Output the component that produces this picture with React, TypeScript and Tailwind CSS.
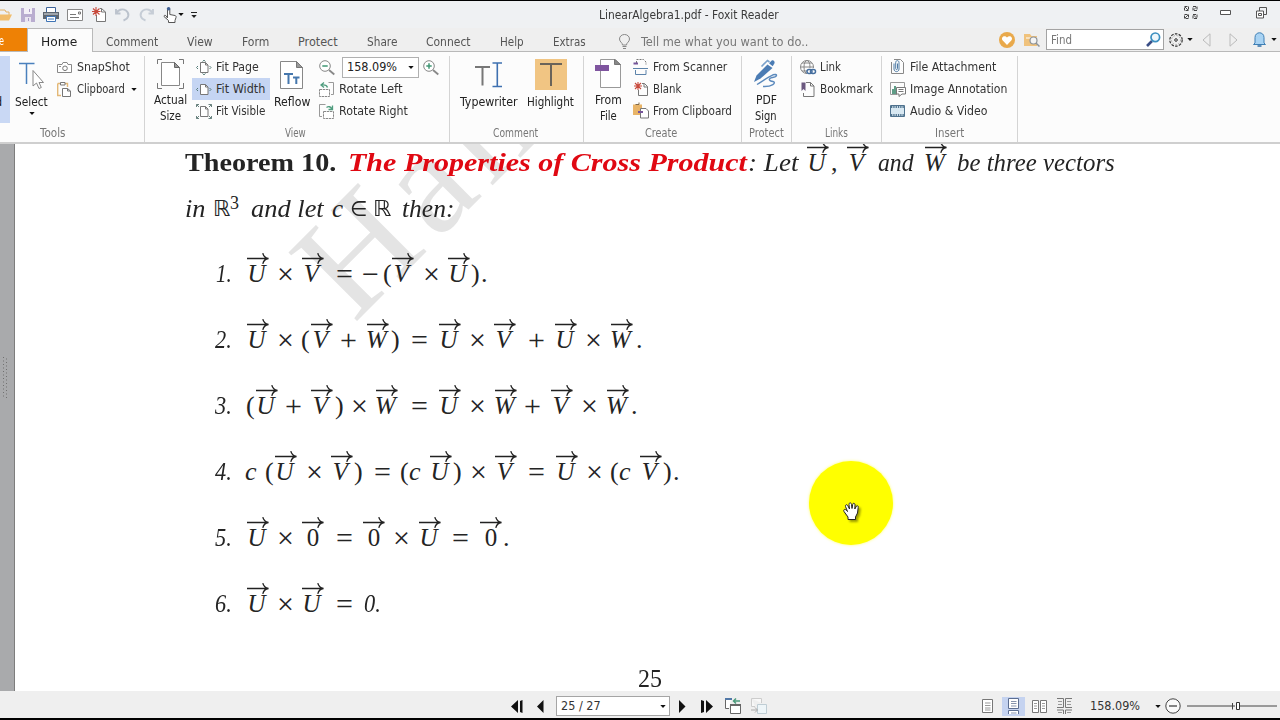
import { useLayoutEffect, useRef, type ReactNode } from 'react';
import clsx from 'clsx';

// Text squeezed or stretched horizontally to an exact width
function Fit({ w, children, className }: { w: number; children: ReactNode; className?: string }) {
  const ref = useRef<HTMLSpanElement>(null);

  useLayoutEffect(() => {
    const el = ref.current;
    if (!el) return;
    el.style.transform = `scaleX(${w / el.offsetWidth})`;
  }, [w]);

  return (
    <span className={clsx('block shrink-0 whitespace-nowrap', className)} style={{ width: w }}>
      <span ref={ref} className="inline-block origin-left">
        {children}
      </span>
    </span>
  );
}

function Icon({ w, h, children, className }: { w: number; h: number; children: ReactNode; className?: string }) {
  return (
    <svg width={w} height={h} viewBox={`0 0 ${w} ${h}`} fill="none" className={clsx('block shrink-0 overflow-visible', className)}>
      {children}
    </svg>
  );
}

function Caret({ className }: { className?: string }) {
  return (
    <Icon w={6} h={3} className={className}>
      <path d="M0.3 0H5.7L3 3Z" fill="#111" />
    </Icon>
  );
}

/* ---------- title bar ---------- */

function TitleBar() {
  return (
    <div className="flex h-[27px] items-center bg-[#eff1f3]">
      <Icon w={12} h={14}>
        <path d="M0 2H5L6 4H9V7" stroke="#e0b066" />
        <path d="M0 6.500H12L9 12.500H0Z" fill="#f1bd6c" />
      </Icon>
      <Icon w={14} h={14} className="ml-[9px]">
        <path d="M0 0H14V14H0Z" fill="#b9add0" />
        <path d="M3 0H11V6H3Z" fill="#f3f0f7" />
        <path d="M4 9H10V14H4Z" fill="#e9e5f0" />
        <path d="M7.500 10V13M8.500 1V4" stroke="#a99bc4" />
      </Icon>
      <Icon w={16} h={15} className="ml-2">
        <path d="M3.500 5V.5H12.500V5" fill="#fff" stroke="#3c6399" />
        <path d="M0 5H16V12H0Z" fill="#5e6670" />
        <path d="M1 7H15" stroke="#dfe4ea" />
        <path d="M3.500 9.500H12.500V14.500H3.500Z" fill="#fff" stroke="#3f74b5" />
        <path d="M5 12H11" stroke="#3f74b5" />
      </Icon>
      <Icon w={16} h={12} className="ml-2">
        <path d="M.5.5H15.500V11.500H.5Z" fill="#fff" stroke="#888" />
        <path d="M3 5.500H9M3 8.500H12M11.500 3H13.500V5H11.500Z" stroke="#777" />
      </Icon>
      <Icon w={14} h={15} className="ml-[9px]">
        <path d="M4.500 8V14.500H13.500V5L9.500 1.500H8" fill="#fff" stroke="#777" />
        <path d="M9.500 1.500V5H13.500" stroke="#777" />
        <path d="M4 0V9M0 4.500H8.500M1 1.500L7.500 7.500M7.500 1.500L1 7.500" stroke="#c84a3c" strokeWidth="1.1" />
      </Icon>
      <Icon w={15} h={13} className="ml-[9px]">
        <path d="M1 1V5.500H5.500M1 5.500C3 2 7 0 11 2.500C15 5.500 14 10.500 8.500 12.500" stroke="#bcc3cd" strokeWidth="1.9" />
      </Icon>
      <Icon w={15} h={13} className="ml-[9px]">
        <path d="M14 1V5.500H9.500M14 5.500C12 2 8 0 4 2.500C0 5.500 1 10.500 6.500 12.500" stroke="#c6cdd6" strokeWidth="1.9" />
      </Icon>
      <Icon w={15} h={16} className="ml-[9px]">
        <path d="M4.500 11V2.500C4.500 .8 6.800 .8 6.800 2.500V7.500L12 8.500C13 8.800 13.300 9.500 13 10.500L12 13.500V15.500H5.500V13.500L1 9.500C.8 8.300 2 8 3 8.800Z" fill="#fff" stroke="#555" />
        <circle cx="5.600" cy="1.800" r="1.800" fill="#3f5f94" />
      </Icon>
      <Caret className="ml-0" />
      <Icon w={6} h={6} className="ml-[7px]">
        <path d="M0 .5H6" stroke="#222" />
        <path d="M.3 3H5.700L3 6Z" fill="#222" />
      </Icon>
      <Fit w={180} className="ml-[402px] text-[#3a3a3a]">LinearAlgebra1.pdf - Foxit Reader</Fit>
      <Icon w={14} h={13} className="ml-[405px] -mt-[5px]">
        <path d="M.5.5H4.500V4.500H.5ZM9 .5H13V4.500H9ZM.5 8.500H4.500V12.500H.5ZM9 8.500H13V12.500H9Z" stroke="#444" strokeDasharray="3 1" />
        <path d="M1 1L4 4M12.500 1L9.500 4M1 12L4 9M12.500 12L9.500 9" stroke="#555" />
      </Icon>
      <Icon w={12} h={5} className="ml-[22px] -mt-[4px]">
        <path d="M.5.5H10.500V4.500H.5Z" fill="#fff" stroke="#555" />
      </Icon>
      <Icon w={12} h={12} className="ml-[24px] -mt-[4px]">
        <path d="M3.500 4V.5H10.500V7.500H8" stroke="#555" />
        <path d="M.5 4H7.500V11H.5Z" fill="#fff" stroke="#555" />
        <path d="M2.500 6.500H5.500V8.500H2.500Z" stroke="#555" />
      </Icon>
    </div>
  );
}

/* ---------- ribbon tabs ---------- */

const tabs = [
  { label: 'Comment', w: 52 },
  { label: 'View', w: 26 },
  { label: 'Form', w: 27 },
  { label: 'Protect', w: 40 },
  { label: 'Share', w: 30 },
  { label: 'Connect', w: 45 },
  { label: 'Help', w: 24 },
  { label: 'Extras', w: 33 },
];

function TabBar() {
  return (
    <div className="flex h-6 shrink-0 border-b border-[#b9b9b9] bg-[#efefef]">
      <div className="flex w-[27px] items-center bg-[#ee8105] pt-[3px] text-white">
        <Fit w={5} className="-ml-[1px]">e</Fit>
      </div>
      <div className="-mb-px flex w-[66px] items-center justify-center border border-b-0 border-[#b9b9b9] bg-[#fcfcfc] pt-[2px] pr-[2px] text-[#222]">
        <Fit w={36}>Home</Fit>
      </div>
      <div className="ml-[13px] flex items-center gap-[29px] pt-[4px] text-[#555]">
        {tabs.map((tab) => (
          <Fit key={tab.label} w={tab.w}>{tab.label}</Fit>
        ))}
      </div>
      <div className="ml-[33px] flex items-center gap-[11px] pt-[4px] text-[#777]">
        <Icon w={11} h={15}>
          <path d="M3.500 11C3.500 8.500 .5 8 .5 5C.5 2.300 2.800 .5 5.500 .5C8.200 .5 10.500 2.300 10.500 5C10.500 8 7.500 8.500 7.500 11ZM3.500 12.500H7.500M4 14.500H7" stroke="#888" />
        </Icon>
        <Fit w={167}>Tell me what you want to do..</Fit>
      </div>
      <div className="ml-[191px] flex items-center">
        <Icon w={16} h={16}>
          <circle cx="8" cy="8" r="8" fill="#e9a94b" />
          <path d="M8 13L3.500 8.300C1.500 5.500 5.500 2.500 8 5.500C10.500 2.500 14.500 5.500 12.500 8.300Z" fill="#fff" />
        </Icon>
        <Icon w={16} h={14} className="ml-[9px]">
          <path d="M0 1H6L7.500 3H13V13H0Z" fill="#f0c27c" />
          <path d="M2 5H13" stroke="#fff" />
          <circle cx="9.500" cy="7.500" r="3.500" fill="#f4f4f4" stroke="#8d9399" strokeWidth="1.200" />
          <path d="M12 10L15.500 13.500" stroke="#8d9399" strokeWidth="1.500" />
        </Icon>
        <div className="ml-[6px] flex h-[21px] w-[118px] items-center justify-between border border-[#a3a3a3] bg-white pr-[2px] pl-[4px] text-[#777]">
          <Fit w={21} className="pt-px">Find</Fit>
          <Icon w={15} h={15}>
            <path d="M6 9L1 14" stroke="#3b4f87" strokeWidth="2.600" />
            <circle cx="9.300" cy="5.300" r="4.300" fill="#eef7fc" stroke="#3b8fc0" strokeWidth="1.700" />
          </Icon>
        </div>
        <Icon w={14} h={14} className="ml-[5px]">
          <circle cx="7" cy="7" r="6.200" stroke="#333" strokeWidth="1.200" strokeDasharray="2.600 1.300" />
          <circle cx="7" cy="7" r="4.500" stroke="#777" strokeDasharray="1.500 1.500" strokeWidth=".6" />
          <circle cx="7" cy="7" r="1.300" stroke="#333" />
        </Icon>
        <Caret className="ml-[4px]" />
        <Icon w={9} h={14} className="ml-[9px]">
          <path d="M8 .8V13.200L1 7Z" stroke="#bbb" />
        </Icon>
        <Icon w={9} h={14} className="ml-[18px]">
          <path d="M1 .8V13.200L8 7Z" stroke="#bbb" />
        </Icon>
        <Icon w={13} h={15} className="ml-[15px]">
          <path d="M.5 12.500L2 11V5.500C2 -.8 11 -.8 11 5.500V11L12.500 12.500Z" fill="#a9d3f3" stroke="#3e7fb5" />
          <path d="M4.500 14H8.500" stroke="#2f6ea6" strokeWidth="1.500" />
        </Icon>
        <Caret className="ml-[5px]" />
      </div>
    </div>
  );
}

/* ---------- ribbon ---------- */

function Group({ label, labelW, className, labelClass, children }: { label: string; labelW: number; className: string; labelClass?: string; children: ReactNode }) {
  return (
    <div className={clsx('flex shrink-0 flex-col border-r border-[#d4d4d4]', className)}>
      <div className="flex h-[67px]">{children}</div>
      <div className={clsx('flex h-[17px] items-center justify-center pt-[3px] text-[#777]', labelClass ?? 'pr-[3px]')}>
        <Fit w={labelW}>{label}</Fit>
      </div>
    </div>
  );
}

function BigButton({ icon, lines, className, children }: { icon: ReactNode; lines: [string, number][]; className?: string; children?: ReactNode }) {
  return (
    <div className={clsx('flex shrink-0 flex-col items-center text-[#222]', className)}>
      <div className="flex h-[37px] items-center">{icon}</div>
      {lines.map(([text, w]) => (
        <Fit key={text} w={w} className="h-4 leading-[17px]">{text}</Fit>
      ))}
      {children}
    </div>
  );
}

function SmallButton({ icon, label, w, active, children }: { icon: ReactNode; label: string; w: number; active?: boolean; children?: ReactNode }) {
  return (
    <div className={clsx('flex h-[22px] items-center pl-1 text-[#333]', active && 'bg-[#c5d5f3]')}>
      <span className="flex w-5 shrink-0">{icon}</span>
      <Fit w={w}>{label}</Fit>
      {children}
    </div>
  );
}

function FitIcon({ kind }: { kind: 'page' | 'width' | 'visible' }) {
  return (
    <Icon w={16} h={15}>
      <path d="M4.500 2.500H9.500L12 5V12.500H4.500Z" fill="#fff" stroke="#777" />
      <path d="M9.500 2.500V5H12" stroke="#777" />
      {kind !== 'visible' && <path d="M2 6L.5 7.500L2 9M13.500 6L15 7.500L13.500 9" stroke="#557c78" />}
      {kind === 'page' && <path d="M6.500 1.500L8 .2L9.500 1.500M6.500 13.500L8 14.800L9.500 13.500" stroke="#557c78" />}
      {kind === 'visible' && (
        <path d="M.5 3V.5H3M.5.5L3 3M12.500.5H15.500V3M15.500.5L13 3M.5 12V14.500H3M.5 14.500L3 12M15.500 12V14.500H12.500M15.500 14.500L13 12" stroke="#69827f" />
      )}
    </Icon>
  );
}

function ZoomIcon({ plus, className }: { plus?: boolean; className?: string }) {
  return (
    <Icon w={16} h={15} className={className}>
      <circle cx="6" cy="6" r="5.300" fill="#fff" stroke="#888" />
      <path d="M10 10L15.300 14.500" stroke="#888" strokeWidth="1.800" />
      <path d="M3.300 6H8.700" stroke="#3f9673" strokeWidth="1.500" />
      {plus && <path d="M6 3.300V8.700" stroke="#3f9673" strokeWidth="1.500" />}
    </Icon>
  );
}

function RotateIcon({ right }: { right?: boolean }) {
  if (right) {
    return (
      <Icon w={15} h={15}>
        <path d="M6.500 .5H.5V12.500H3" stroke="#999" />
        <path d="M4.500 7.500H14.500V14.500H4.500Z" fill="#fff" stroke="#888" strokeDasharray="2.500 .7" />
        <path d="M13.500 1.500V5.500H9.500M13 5C11.500 2.500 9.500 2 7.500 3.500" stroke="#4f9c7e" strokeWidth="1.300" />
      </Icon>
    );
  }
  return (
    <Icon w={15} h={15}>
      <path d="M9.500 .5H14.500V12.500H12" stroke="#999" />
      <path d="M.5 7.500H10.500V14.500H.5Z" fill="#fff" stroke="#888" strokeDasharray="2.500 .7" />
      <path d="M5 .5L2 3L5 5.500M2.300 3C6 2.500 8 3.500 8.500 5.500" stroke="#4f9c7e" strokeWidth="1.300" />
    </Icon>
  );
}

function Ribbon() {
  return (
    <div className="flex h-[92px] shrink-0 border-b-2 border-[#cfcfcf] bg-[#fcfcfc] pt-1">
      <Group label="Tools" labelW={25} labelClass="pr-[40px]" className="w-[145px]">
        <div className="flex h-[67px] w-[10px] flex-col bg-[#c9d8f4] pt-[37px] text-[#222]">
          <Fit w={7} className="-ml-[5px] leading-[17px]">d</Fit>
        </div>
        <BigButton
          className="ml-[5px] w-[33px]"
          lines={[['Select', 33]]}
          icon={
            <Icon w={26} h={28}>
              <path d="M0 2.500H15.500M7.500 2.500V23" stroke="#4a80bd" strokeWidth="1.500" />
              <path d="M14 9.500V25L17.500 22L20 27.500L22.300 26.500L20 21.500H24.500Z" fill="#fff" stroke="#888" />
            </Icon>
          }
        >
          <Caret className="mt-[3px]" />
        </BigButton>
        <div className="ml-[5px]">
          <SmallButton
            label="SnapShot"
            w={53}
            icon={
              <Icon w={15} h={11}>
                <path d="M.5 2.500H5L6 .5H10L11 2.500H14.500V10.500H.5Z" fill="#fff" stroke="#888" />
                <circle cx="8" cy="6.300" r="2.300" stroke="#777" />
                <path d="M2 4.500H4" stroke="#888" />
              </Icon>
            }
          />
          <SmallButton
            label="Clipboard"
            w={48}
            icon={
              <Icon w={14} h={15}>
                <path d="M.7 1.500H10.500V5M.7 1.500V13.500H4" stroke="#e3b877" strokeWidth="1.400" />
                <path d="M3.500 .5H8V3H3.500Z" fill="#fff" stroke="#777" />
                <path d="M5.500 6.500H10.500L13.500 9V14.500H5.500ZM10.500 6.500V9H13.500" fill="#fff" stroke="#777" />
              </Icon>
            }
          >
            <Caret className="ml-[6px]" />
          </SmallButton>
        </div>
      </Group>

      <Group label="View" labelW={21} className="w-[305px]">
        <BigButton
          className="ml-[8px] w-[34px]"
          lines={[['Actual', 33], ['Size', 21]]}
          icon={
            <Icon w={27} h={30}>
              <path d="M5 .5H.5V5M22 .5H26.500V5M.5 24V29.500H5M26.500 24V29.500H22" stroke="#777" />
              <path d="M4.500 3.500H17.500L22.500 8.500V26.500H4.500Z" fill="#fff" stroke="#888" />
              <path d="M17.500 3.500V8.500H22.500Z" fill="#999" stroke="#666" />
            </Icon>
          }
        />
        <div className="ml-[5px] w-[78px]">
          <SmallButton label="Fit Page" w={43} icon={<FitIcon kind="page" />} />
          <SmallButton label="Fit Width" w={49} active icon={<FitIcon kind="width" />} />
          <SmallButton label="Fit Visible" w={49} icon={<FitIcon kind="visible" />} />
        </div>
        <BigButton
          className="ml-[4px] w-[36px]"
          lines={[['Reflow', 36]]}
          icon={
            <Icon w={23} h={28} className="-ml-[2px]">
              <path d="M.5.5H16.500L22.500 6.500V27.500H.5Z" fill="#fff" stroke="#888" />
              <path d="M16.500 .5V6.500H22.500Z" fill="#999" stroke="#777" />
              <path d="M4 13H13M8.500 13V23M13 16.500H19.500M16.300 16.500V23" stroke="#4577ad" strokeWidth="2" />
            </Icon>
          }
        />
        <div className="ml-[5px]">
          <div className="flex h-[22px] items-center pl-1">
            <ZoomIcon />
            <div className="ml-[7px] flex h-[21px] w-[77px] items-center justify-between border border-[#b0b0b0] bg-white px-1 text-[#222]">
              <Fit w={50}>158.09%</Fit>
              <Caret />
            </div>
            <ZoomIcon plus className="ml-[4px]" />
          </div>
          <SmallButton label="Rotate Left" w={63} icon={<RotateIcon />} />
          <SmallButton label="Rotate Right" w={69} icon={<RotateIcon right />} />
        </div>
      </Group>

      <Group label="Comment" labelW={45} className="w-[134px]">
        <BigButton
          className="ml-[10px] w-[58px]"
          lines={[['Typewriter', 58]]}
          icon={
            <Icon w={28} h={26}>
              <path d="M0 5H15M7.500 5V23.500" stroke="#777" strokeWidth="2" />
              <path d="M17.500 1H27M17.500 24.500H27M22.300 1V24.500" stroke="#3e70b0" strokeWidth="1.600" />
            </Icon>
          }
        />
        <BigButton
          className="ml-[9px] w-[47px]"
          lines={[['Highlight', 47]]}
          icon={
            <Icon w={32} h={31}>
              <path d="M0 0H32V31H0Z" fill="#f1c583" />
              <path d="M5 5H27M16 5V27" stroke="#6b6459" strokeWidth="2" />
            </Icon>
          }
        />
      </Group>

      <Group label="Create" labelW={32} className="w-[158px]">
        <BigButton
          className="ml-[10px] w-[28px]"
          lines={[['From', 27], ['File', 17]]}
          icon={
            <Icon w={26} h={29}>
              <path d="M5.500 .5H20.500L25.500 5.500V28.500H5.500Z" fill="#fff" stroke="#999" />
              <path d="M19.500 .5V5.500H25.500Z" fill="#888" stroke="#777" />
              <path d="M0 6H14V12H0Z" fill="#7f559f" />
            </Icon>
          }
        />
        <div className="ml-[7px]">
          <SmallButton
            label="From Scanner"
            w={74}
            icon={
              <Icon w={15} h={16}>
                <path d="M3.500 2V5M3.500 .5H10.500L13 3V5.500" stroke="#777" strokeDasharray="2 1" />
                <path d="M.5 4.500H5" stroke="#75549b" strokeWidth="2" />
                <path d="M0 9.500H15M2.500 11V15.500H13V11" stroke="#5c83aa" />
              </Icon>
            }
          />
          <SmallButton
            label="Blank"
            w={28}
            icon={
              <Icon w={14} h={14} className="ml-[1px]">
                <path d="M4.500 8V13.500H13.500V4.500L10.500 1.500H8M10 1.500V5H13.500" stroke="#777" />
                <path d="M4 0V8M0 4H8M1 1L7 7M7 1L1 7" stroke="#c84a3c" strokeWidth="1.100" />
              </Icon>
            }
          />
          <SmallButton
            label="From Clipboard"
            w={79}
            icon={
              <Icon w={15} h={16}>
                <path d="M0 1.500H9V12H0Z" fill="#e8b468" />
                <path d="M2.500 1.500H6V-.5" stroke="#806846" />
                <path d="M7.500 5.500H13L15.500 8V15H7.500Z" fill="#fff" stroke="#777" />
                <path d="M5 9H10" stroke="#76549b" strokeWidth="2" />
              </Icon>
            }
          />
        </div>
      </Group>

      <Group label="Protect" labelW={35} labelClass="pr-px" className="w-[50px]">
        <BigButton
          className="ml-[12px] w-[24px]"
          lines={[['PDF', 21], ['Sign', 22]]}
          icon={
            <Icon w={25} h={28}>
              <path d="M0 22L2.500 15.500L13.500 4.500L18.500 8L6.500 18.500Z" fill="#4b7cb4" />
              <path d="M7.500 6.500L13.500 .5L15.500 2" stroke="#7ba2cb" strokeWidth="1.600" />
              <path d="M15 3.300L18 .3C20 0 21 2 20.500 3.300L18.700 6.200Z" fill="#4b7cb4" />
              <path d="M3 24.500C8 21.500 14 17 19 14.800C24 13.500 23.500 16.500 18.500 17.500C13.500 18.500 15 21 19 21.500C23 22.500 18 27 9 26.500" stroke="#5c8abd" strokeWidth="1.400" />
            </Icon>
          }
        />
      </Group>

      <Group label="Links" labelW={23} labelClass="pr-px" className="w-[90px]">
        <div className="ml-[4px]">
          <SmallButton
            label="Link"
            w={21}
            icon={
              <Icon w={16} h={15}>
                <circle cx="7" cy="7" r="6.500" stroke="#888" />
                <ellipse cx="7" cy="7" rx="3" ry="6.500" stroke="#888" />
                <path d="M.5 7H13.500M2 3H12M2 11H8" stroke="#888" />
                <path d="M7 8H16V15H7Z" fill="#fcfcfc" />
                <rect x="7" y="9.500" width="5" height="4" rx="2" stroke="#466f9f" strokeWidth="1.500" />
                <rect x="10.500" y="9.500" width="5" height="4" rx="2" stroke="#466f9f" strokeWidth="1.500" />
              </Icon>
            }
          />
          <SmallButton
            label="Bookmark"
            w={53}
            icon={
              <Icon w={15} h={15} className="ml-[1px]">
                <path d="M5 .5H9.500L13 4V14.500H2.500V11M9.500 .5V4H13" stroke="#777" />
                <path d="M.5 .5H4.500V9L2.500 7L.5 9Z" fill="#6b587f" />
              </Icon>
            }
          />
        </div>
      </Group>

      <Group label="Insert" labelW={29} labelClass="pr-px" className="w-[136px]">
        <div className="ml-[4px]">
          <SmallButton
            label="File Attachment"
            w={86}
            icon={
              <Icon w={14} h={16} className="ml-[1px]">
                <path d="M3 .5H9.500L12.500 3.500V14.500H.5V3" stroke="#888" />
                <path d="M3 4.500V10C3 13.500 8 13.500 8 10V3.500C8 1 4.700 1 4.700 3.500V9.500C4.700 11 6.500 11 6.500 9.500V4.500" stroke="#4f7ca6" />
              </Icon>
            }
          />
          <SmallButton
            label="Image Annotation"
            w={97}
            icon={
              <Icon w={16} h={15}>
                <path d="M14.500 5V.5H.5V12.500H7" stroke="#999" />
                <path d="M3 12V7M5 12V4" stroke="#438c72" strokeWidth="1.700" />
                <path d="M6.500 5.500H15.500V12H12L9 14.500V12H6.500Z" fill="#fff" stroke="#777" />
                <path d="M8.500 7.500H13.500M8.500 9.500H13.500" stroke="#777" />
              </Icon>
            }
          />
          <SmallButton
            label="Audio & Video"
            w={77}
            icon={
              <Icon w={15} h={12}>
                <path d="M.5.5H14.500V11.500H.5Z" fill="#d8e8f2" stroke="#4f728e" />
                <path d="M1 2H14M1 10H14" stroke="#4f728e" strokeWidth="2" strokeDasharray="1.300 1" />
              </Icon>
            }
          />
        </div>
      </Group>
    </div>
  );
}

/* ---------- document ---------- */

const PAGE_LEFT = 15;

// [x, text, fitted width]; a leading ">" puts a vector arrow over the letter
type Token = [number, string, number?];

const lead: Token[] = [
  [807, '>U'], [831, ','], [847, '>V'], [878, 'and', 36], [925, '>W'], [957, 'be three vectors', 158],
];

const rows: Token[][] = [
  [[216, '1.', 16], [247, '>U'], [279, '×'], [302, '>V'], [338, '='], [364, '−'], [383, '('], [392, '>V'], [425, '×'], [448, '>U'], [471, ')'], [481, '.']],
  [[215, '2.', 17], [247, '>U'], [279, '×'], [301, '('], [311, '>V'], [342, '+'], [367, '>W'], [391, ')'], [413, '='], [439, '>U'], [471, '×'], [494, '>V'], [530, '+'], [555, '>U'], [587, '×'], [611, '>W'], [636, '.']],
  [[215, '3.', 17], [246, '('], [256, '>U'], [287, '+'], [311, '>V'], [335, ')'], [353, '×'], [376, '>W'], [413, '='], [439, '>U'], [471, '×'], [495, '>W'], [526, '+'], [551, '>V'], [583, '×'], [607, '>W'], [631, '.']],
  [[215, '4.', 17], [245, 'c'], [265, '('], [275, '>U'], [308, '×'], [331, '>V'], [354, ')'], [376, '='], [400, '('], [409, 'c'], [430, '>U'], [453, ')'], [472, '×'], [495, '>V'], [530, '='], [556, '>U'], [588, '×'], [610, '('], [619, 'c'], [640, '>V'], [663, ')'], [673, '.']],
  [[215, '5.', 17], [247, '>U'], [279, '×'], [302, '>0'], [338, '='], [363, '>0'], [395, '×'], [419, '>U'], [454, '='], [480, '>0'], [503, '.']],
  [[215, '6.', 17], [247, '>U'], [279, '×'], [302, '>U'], [338, '='], [364, '0.', 17]],
];

function Glyph({ text, fit }: { text: string; fit?: number }) {
  if (text.startsWith('>')) {
    const letter = text.slice(1);
    return (
      <div className="flex w-[22px] flex-col items-center">
        <Icon w={22} h={5}>
          <path d="M0 2.500H21M15.800 -2.800C16.500 .2 18.500 2 21.500 2.500C18.500 3 16.500 4.800 15.800 7.800" stroke="#222" strokeWidth="1.300" />
        </Icon>
        <span className={clsx('h-[26px] leading-[26px]', letter !== '0' && '-ml-[3px] italic')}>{letter}</span>
      </div>
    );
  }
  if (fit) return <Fit w={fit} className="pt-[5px] leading-[26px] italic">{text}</Fit>;
  const operator = '×=+−'.includes(text);
  return (
    <span className={clsx('block pt-[5px] leading-[26px]', operator ? '-ml-[2px] text-[30px]' : 'text-[26px]', text === 'c' && 'italic')}>
      {text}
    </span>
  );
}

function Cells({ tokens, origin }: { tokens: Token[]; origin: number }) {
  return (
    <div className="flex h-[31px] shrink-0" style={{ paddingLeft: tokens[0][0] - origin }}>
      {tokens.map(([x, text, fit], i) => (
        <div key={x} className="shrink-0 whitespace-nowrap" style={{ width: i + 1 < tokens.length ? tokens[i + 1][0] - x : undefined }}>
          <Glyph text={text} fit={fit} />
        </div>
      ))}
    </div>
  );
}

function Page() {
  return (
    <div className="relative flex flex-1 flex-col overflow-hidden bg-white font-['Liberation_Serif',serif] text-[25px] text-[#242424]">
      {/* watermark runs diagonally below the text */}
      <div className="absolute top-[59px] left-[351px] h-[133px] origin-bottom-left -rotate-45 text-[148px] leading-[133px] tracking-[10px] whitespace-nowrap text-[#e4e4e4]">
        Han
      </div>

      <div className="relative flex h-[31px] shrink-0 pt-px pl-[170px]">
        <Fit w={151} className="pt-[5px] leading-[26px] font-bold">Theorem 10.</Fit>
        <Fit w={399} className="ml-[12px] pt-[5px] leading-[26px] font-bold text-[#e00812] italic">The Properties of Cross Product</Fit>
        <Fit w={51} className="ml-px pt-[5px] leading-[26px] italic">: Let</Fit>
        <Cells tokens={lead} origin={799} />
      </div>

      <div className="relative mt-[15px] flex h-[31px] shrink-0 pt-[6px] pl-[170px] leading-[26px]">
        <Fit w={20} className="italic">in</Fit>
        <Fit w={17} className="ml-[8px] font-['DejaVu_Sans',sans-serif] text-[22px]">ℝ</Fit>
        <Fit w={9} className="-mt-[6px] text-[18px]">3</Fit>
        <Fit w={73} className="ml-[12px] italic">and let</Fit>
        <Fit w={11} className="ml-[8px] italic">c</Fit>
        <Fit w={17} className="ml-[7px] font-['DejaVu_Sans',sans-serif] text-[21px]">∈</Fit>
        <Fit w={18} className="ml-[6px] font-['DejaVu_Sans',sans-serif] text-[22px]">ℝ</Fit>
        <Fit w={52} className="ml-[11px] italic">then:</Fit>
      </div>

      <div className="relative mt-[35px] flex flex-col gap-[35px]">
        {rows.map((tokens) => (
          <Cells key={tokens[0][1]} tokens={tokens} origin={PAGE_LEFT} />
        ))}
      </div>

      <div className="relative mt-[49px] pl-[623px] leading-[26px]">
        <Fit w={24}>25</Fit>
      </div>

      {/* highlighted hand cursor */}
      <div className="absolute top-[317px] left-[794px] flex size-[84px] items-center justify-center rounded-full bg-[#ffff00] shadow-[0_0_3px_#ffff66]">
        <Icon w={17} h={18} className="mt-[16px] drop-shadow-[2px_2px_1px_rgba(90,90,0,0.6)]">
          <path
            d="M5 17.500V15L1 9.500C0 7.500 2 6.500 3.500 8.500L4.500 9.500L2.500 4.500C2 2.500 4 2 5 4L6.500 7L6 2.500C6 .3 8.200 .3 8.500 2.500L9 6.500L9.700 2.500C10 .6 12 1 12 3L11.800 7L13.200 4.500C14.200 3 15.700 4 15.200 5.500L14.500 11L12.500 15V17.500Z"
            fill="#fff"
            stroke="#222"
          />
        </Icon>
      </div>
    </div>
  );
}

/* ---------- status bar ---------- */

function StatusBar() {
  return (
    <div className="flex h-[27px] shrink-0 items-center bg-[#efefef] pt-[3px] text-[#333]">
      <Icon w={12} h={13} className="ml-[511px]">
        <path d="M7 0V13L0 6.500ZM9 1L11.500 0V13L9 12Z" fill="#111" />
      </Icon>
      <Icon w={7} h={13} className="ml-[14px]">
        <path d="M6.500 0V13L0 6.500Z" fill="#111" />
      </Icon>
      <div className="ml-[12px] flex h-5 w-[114px] items-center justify-between border border-[#a5a5a5] bg-white pr-[3px] pl-1">
        <Fit w={40}>25 / 27</Fit>
        <Caret />
      </div>
      <Icon w={7} h={13} className="ml-[9px]">
        <path d="M0 0V13L6.500 6.500Z" fill="#111" />
      </Icon>
      <Icon w={12} h={13} className="ml-[15px]">
        <path d="M5 0V13L12 6.500ZM0 0L3 1V12L0 13Z" fill="#111" />
      </Icon>
      <Icon w={16} h={16} className="ml-[12px]">
        <path d="M6 .5H.5V10.500H4" fill="#fff" stroke="#666" />
        <path d="M0 1H7" stroke="#5379a8" strokeWidth="2" />
        <path d="M5.500 6.500H15.500V15.500H5.500Z" fill="#fff" stroke="#666" />
        <path d="M5 7H16" stroke="#666" strokeWidth="2" />
        <path d="M15 3H8.500M11 .5L8.500 3L11 5.500" stroke="#4d9b7c" strokeWidth="1.500" />
      </Icon>
      <Icon w={16} h={16} className="ml-[10px]">
        <path d="M.5 .5H10.500V5M.5.5V8.500H4" fill="#f8f8f8" stroke="#ccc" />
        <path d="M6.500 6.500H15.500V15.500H6.500Z" fill="#eef5f8" stroke="#bfcdd4" />
        <path d="M0 12H6M4 9.500L6.500 12L4 14.500" stroke="#aaa" />
      </Icon>
      <Icon w={11} h={14} className="ml-[215px]">
        <path d="M.5.5H10.500V13.500H.5Z" fill="#fff" stroke="#777" />
        <path d="M3 4H8.500M3 6.500H8.500M3 9H8.500M3 11H8.500" stroke="#999" />
      </Icon>
      <div className="ml-[9px] flex h-[19px] w-[23px] justify-center bg-[#c5d3f0] pt-px">
        <Icon w={11} h={16}>
          <path d="M.5.5H10.500V10.500H.5ZM.5 16V12.500H10.500V16" fill="#fff" stroke="#5c6e91" />
          <path d="M3 3.500H8.500M3 5.500H8.500M3 8H8.500M3 15H8.500" stroke="#8794ad" />
        </Icon>
      </div>
      <Icon w={15} h={13} className="ml-[7px]">
        <path d="M.5.5H6.500V12.500H.5ZM8.500.5H14.500V12.500H8.500Z" fill="#fff" stroke="#777" />
        <path d="M2 3.500H5M2 6H5M2 8.500H5M10 3.500H13M10 6H13M10 8.500H13" stroke="#999" />
      </Icon>
      <Icon w={15} h={16} className="ml-[10px]">
        <path d="M0 .5H6.500V9.500H0M15 .5H8.500V9.500H15M0 12H6.500V16M15 12H8.500V16" stroke="#777" />
        <path d="M1 3.500H5M1 6.500H5M10 3.500H14M10 6.500H14M1 14.500H5M10 14.500H14" stroke="#999" />
      </Icon>
      <Fit w={50} className="ml-[18px]">158.09%</Fit>
      <Caret className="ml-[15px]" />
      <Icon w={16} h={16} className="ml-[4px] -mt-px">
        <circle cx="8" cy="8" r="7.200" fill="#fafafa" stroke="#444" />
        <path d="M4 8H12" stroke="#444" strokeWidth="1.300" />
      </Icon>
      <Icon w={93} h={9} className="ml-[6px]">
        <path d="M0 4H48M51 4H90M45.500 1V7.500" stroke="#444" />
        <path d="M49.500 .5H52.500V7.500H49.500Z" fill="#fff" stroke="#333" />
      </Icon>
    </div>
  );
}

export default function App() {
  return (
    <div className="flex h-[720px] w-[1280px] flex-col overflow-hidden border-t border-b-2 border-black bg-white font-['DejaVu_Sans_Condensed','DejaVu_Sans',sans-serif] text-[12.500px] leading-4">
      <TitleBar />
      <TabBar />
      <Ribbon />
      <div className="flex min-h-0 flex-1">
        {/* collapsed navigation pane */}
        <div className="flex w-[15px] shrink-0 border-r border-[#7d7d7d] bg-[#a9aaac] pt-[213px] pl-[3px]">
          <Icon w={4} h={42}>
            <path d="M.5 0V42M3.500 1.500V42" stroke="#707070" strokeDasharray="1 2.500" />
          </Icon>
        </div>
        <Page />
      </div>
      <StatusBar />
    </div>
  );
}
